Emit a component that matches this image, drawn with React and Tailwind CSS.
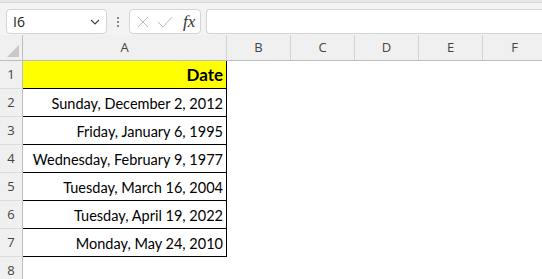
import React from "react"

const cols = ["B", "C", "D", "E", "F"]

const dates = [
  "Sunday, December 2, 2012",
  "Friday, January 6, 1995",
  "Wednesday, February 9, 1977",
  "Tuesday, March 16, 2004",
  "Tuesday, April 19, 2022",
  "Monday, May 24, 2010",
]

function RowHead({ n }) {
  return (
    <div className="w-[23px] shrink-0 bg-[#f0f0f0] border-r border-r-[#bdbdbd] border-b border-b-[#dcdcdc] flex items-center justify-center text-[13px] text-[#444]">
      {n}
    </div>
  )
}

export default function App() {
  return (
    <div
      className="w-[542px] h-[279px] overflow-hidden bg-white"
      style={{ fontFamily: "'Open Sans', 'Noto Sans', sans-serif" }}
    >
      {/* top strip */}
      <div className="h-[2px] bg-[#e8e8e8] border-b border-[#d6d6d6] box-content" />

      {/* formula bar */}
      <div className="h-[32px] bg-[#f3f3f3] flex items-end pb-px">
        <div className="ml-[6px] w-[101px] h-[25px] rounded-[4px] border border-[#d4d4d4] bg-white flex items-center pl-[6px] pr-[6px]">
          <span className="text-[14px] text-[#222] flex-1">I6</span>
          <svg width="10" height="6" viewBox="0 0 10 6" className="mt-px">
            <path d="M1 1 L5 5 L9 1" fill="none" stroke="#444" strokeWidth="1.2" />
          </svg>
        </div>
        <div className="w-[22px] h-[25px] flex flex-col items-center justify-center gap-[2px]">
          <span className="w-[2px] h-[2px] bg-[#8a8a8a]" />
          <span className="w-[2px] h-[2px] bg-[#8a8a8a]" />
          <span className="w-[2px] h-[2px] bg-[#8a8a8a]" />
        </div>
        <div className="w-[72px] h-[25px] rounded-[4px] border border-[#d4d4d4] bg-white flex items-center pl-[7px]">
          <svg width="12" height="12" viewBox="0 0 12 12">
            <path d="M1 1 L11 11 M11 1 L1 11" stroke="#bdbdbd" strokeWidth="1" fill="none" />
          </svg>
          <svg width="16" height="12" viewBox="0 0 16 12" className="ml-[8px]">
            <path d="M1 6 L6 11 L15 1" stroke="#bdbdbd" strokeWidth="1" fill="none" />
          </svg>
          <span
            className="ml-[10px] text-[17px] italic text-[#333] leading-none"
            style={{ fontFamily: "'Liberation Serif', serif" }}
          >
            fx
          </span>
        </div>
        <div className="ml-[5px] flex-1 h-[25px] rounded-l-[4px] border border-r-0 border-[#d4d4d4] bg-white" />
      </div>

      {/* column headers */}
      <div className="h-[26px] flex bg-[#f0f0f0] border-b border-[#bdbdbd]">
        <div className="w-[23px] shrink-0 border-r border-[#bdbdbd] flex items-end justify-end pr-[3px] pb-[3px]">
          <svg width="12" height="12" viewBox="0 0 12 12">
            <path d="M12 0 L12 12 L0 12 Z" fill="#c8c8c8" />
          </svg>
        </div>
        <div className="w-[204px] shrink-0 border-r border-[#d4d4d4] flex items-center justify-center text-[13px] text-[#444]">
          A
        </div>
        {cols.map((c) => (
          <div
            key={c}
            className="w-[64px] shrink-0 border-r border-[#d4d4d4] flex items-center justify-center text-[13px] text-[#444]"
          >
            {c}
          </div>
        ))}
      </div>

      {/* row 1 */}
      <div className="h-[28px] flex">
        <RowHead n={1} />
        <div
          className="w-[204px] shrink-0 bg-[#ffff00] border-r border-b border-black flex items-center justify-end pr-[3px] text-[17px] font-bold text-black"
          style={{ fontFamily: "Lato, sans-serif" }}
        >
          Date
        </div>
      </div>

      {dates.map((d, i) => (
        <div key={d} className="h-[28px] flex">
          <RowHead n={i + 2} />
          <div
            className="w-[204px] shrink-0 border-r border-b border-black flex items-center justify-end pr-[3px] pt-[2px] text-[14.5px] text-black"
            style={{ fontFamily: "Lato, sans-serif" }}
          >
            {d}
          </div>
        </div>
      ))}

      <div className="h-[28px] flex">
        <RowHead n={8} />
      </div>
    </div>
  )
}
